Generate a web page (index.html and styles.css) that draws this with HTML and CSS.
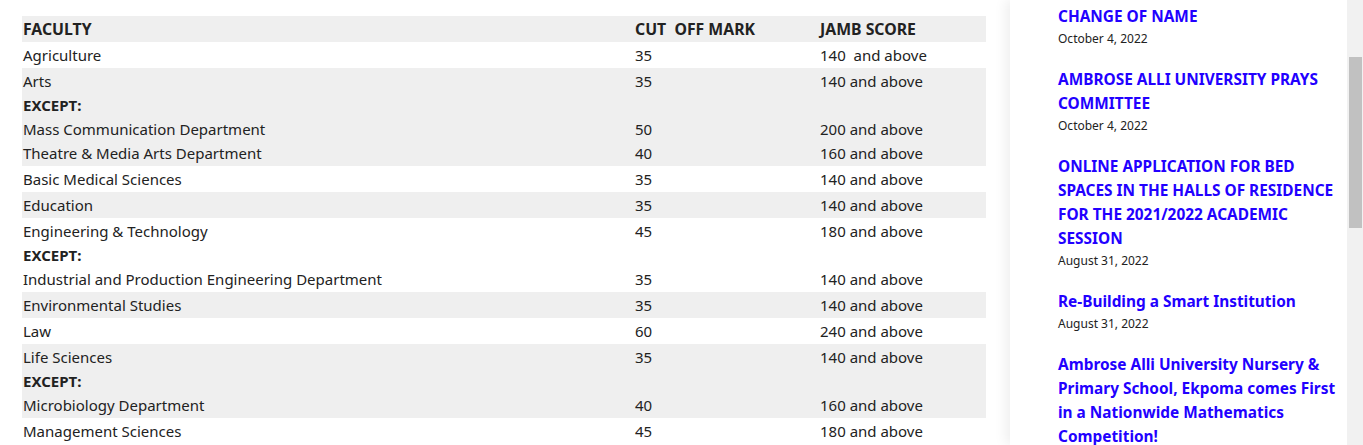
FILE: index.html
```html
<!DOCTYPE html>
<html>
<head>
<meta charset="utf-8">
<link rel="stylesheet" href="styles.css">
</head>
<body>
<div class="page">
  <main class="main">
    <table class="marks">
      <colgroup>
        <col class="c1"><col class="c2"><col class="c3">
      </colgroup>
      <thead>
        <tr><th>FACULTY</th><th>CUT&nbsp; OFF MARK</th><th>JAMB SCORE</th></tr>
      </thead>
      <tbody>
        <tr><td>Agriculture</td><td>35</td><td>140&nbsp; and above</td></tr>
        <tr><td>Arts<br><strong>EXCEPT:</strong><br>Mass Communication Department<br>Theatre &amp; Media Arts Department</td><td>35<br><br>50<br>40</td><td>140 and above<br><br>200 and above<br>160 and above</td></tr>
        <tr><td>Basic Medical Sciences</td><td>35</td><td>140 and above</td></tr>
        <tr><td>Education</td><td>35</td><td>140 and above</td></tr>
        <tr><td>Engineering &amp; Technology<br><strong>EXCEPT:</strong><br>Industrial and Production Engineering Department</td><td>45<br><br>35</td><td>180 and above<br><br>140 and above</td></tr>
        <tr><td>Environmental Studies</td><td>35</td><td>140 and above</td></tr>
        <tr><td>Law</td><td>60</td><td>240 and above</td></tr>
        <tr><td>Life Sciences<br><strong>EXCEPT:</strong><br>Microbiology Department</td><td>35<br><br>40</td><td>140 and above<br><br>160 and above</td></tr>
        <tr><td>Management Sciences</td><td>45</td><td>180 and above</td></tr>
      </tbody>
    </table>
  </main>
  <aside class="sidebar">
    <ul class="posts">
      <li class="post"><a class="post-title" href="#">CHANGE OF NAME</a><span class="post-date">October 4, 2022</span></li>
      <li class="post"><a class="post-title" href="#">AMBROSE ALLI UNIVERSITY PRAYS COMMITTEE</a><span class="post-date">October 4, 2022</span></li>
      <li class="post"><a class="post-title" href="#">ONLINE APPLICATION FOR BED SPACES IN THE HALLS OF RESIDENCE FOR THE 2021/2022 ACADEMIC SESSION</a><span class="post-date">August 31, 2022</span></li>
      <li class="post"><a class="post-title" href="#">Re-Building a Smart Institution</a><span class="post-date">August 31, 2022</span></li>
      <li class="post"><a class="post-title" href="#">Ambrose Alli University Nursery &amp; Primary School, Ekpoma comes First in a Nationwide Mathematics Competition!</a><span class="post-date">August 31, 2022</span></li>
    </ul>
  </aside>
  <div class="scrollbar"><div class="thumb"></div></div>
</div>
</body>
</html>
```
FILE: styles.css
```css
html, body {
  margin: 0;
  padding: 0;
  height: 100%;
  overflow: hidden;
  background: #ffffff;
}
body {
  font-family: "Noto Sans", "Open Sans", sans-serif;
  color: #222222;
}
.page {
  display: flex;
  height: 445px;
  overflow: hidden;
}
.main {
  width: 1010px;
  flex: none;
  padding: 16px 0 0 22px;
  box-sizing: border-box;
}
.marks {
  width: 964px;
  border-collapse: collapse;
  table-layout: fixed;
  font-size: 15px;
  line-height: 24px;
}
.c1 { width: 612px; }
.c2 { width: 185px; }
.c3 { width: 167px; }
.marks th,
.marks td {
  padding: 1px 1px;
  text-align: left;
  vertical-align: top;
  font-weight: 400;
  white-space: nowrap;
}
.marks th {
  font-weight: 700;
  font-size: 15.8px;
}
.marks strong {
  font-weight: 700;
}
.marks thead tr {
  background: #efefef;
}
.marks tbody tr:nth-child(even) {
  background: #efefef;
}
.sidebar {
  width: 337px;
  flex: none;
  background: #ffffff;
  box-shadow: -4px 0 12px rgba(0, 0, 0, 0.07);
  padding: 5px 2px 0 48px;
  box-sizing: border-box;
}
.posts {
  list-style: none;
  margin: 0;
  padding: 0;
}
.post {
  margin: 0 0 19px 0;
}
.post-title {
  display: block;
  color: #2200ff;
  font-weight: 700;
  font-size: 15.4px;
  line-height: 24px;
  text-decoration: none;
}
.post-date {
  display: block;
  font-size: 12px;
  line-height: 20px;
  color: #222222;
}
.scrollbar {
  width: 16px;
  flex: none;
  background: #f1f1f1;
  box-sizing: border-box;
  padding: 57px 1px 0 2px;
}
.thumb {
  height: 171px;
  background: #c1c1c1;
}
```
